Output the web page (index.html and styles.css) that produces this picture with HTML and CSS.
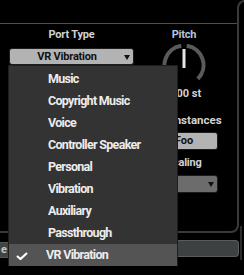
FILE: index.html
```html
<!DOCTYPE html>
<html>
<head>
<meta charset="utf-8">
<link rel="stylesheet" href="styles.css">
</head>
<body>
<div class="frame">
  <div class="main">
    <div class="top"></div>
    <div class="panel">
      <div class="cols">
        <div class="col">
          <div class="lbl">Port Type</div>
          <div class="select light"><span>VR Vibration</span><span class="arrow"></span></div>
        </div>
        <div class="col">
          <div class="lbl blue">Pitch</div>
          <svg class="knob" width="44" height="44" viewBox="0 0 44 44">
            <path d="M8.2 35.8 A19.5 19.5 0 0 1 19.3 2.7" fill="none" stroke="#5a5a5a" stroke-width="4"/>
            <path d="M24.7 2.7 A19.5 19.5 0 0 1 35.8 35.8" fill="none" stroke="#5a5a5a" stroke-width="4"/>
            <rect x="20.5" y="6" width="3" height="19" fill="#e4e4e4"/>
          </svg>
          <div class="val">0.00 st</div>
          <div class="lbl sub">Max Instances</div>
          <div class="field">Foo</div>
          <div class="lbl sub2">Scaling</div>
          <div class="select dark"><span></span><span class="arrow"></span></div>
        </div>
      </div>
    </div>
    <div class="bottom">
      <div class="bleft">e</div>
      <div class="bfield"></div>
    </div>
  </div>
  <div class="side">
    <div class="side-up"></div>
    <div class="side-low"></div>
  </div>
  <div class="menu">
    <div class="item">Music</div>
    <div class="item">Copyright Music</div>
    <div class="item">Voice</div>
    <div class="item">Controller Speaker</div>
    <div class="item">Personal</div>
    <div class="item">Vibration</div>
    <div class="item">Auxiliary</div>
    <div class="item">Passthrough</div>
    <div class="item sel"><svg class="check" width="12" height="8" viewBox="0 0 12 8"><path d="M1 4 L4.5 7 L11 1" fill="none" stroke="#fff" stroke-width="2.2"/></svg>VR Vibration</div>
  </div>
</div>
</body>
</html>
```
FILE: styles.css
```css
html, body {
  margin: 0;
  padding: 0;
  background: #000;
}
.frame {
  position: relative;
  width: 244px;
  height: 275px;
  overflow: hidden;
  background: #000;
  font-family: Roboto, "Liberation Sans", sans-serif;
  font-weight: 700;
  display: grid;
  grid-template-columns: 240px 4px;
  align-items: start;
}
.main {
  width: 240px;
}
.side {
  display: flex;
  flex-direction: column;
}
.side-up {
  box-sizing: border-box;
  margin-left: -3px;
  width: 12px;
  height: 226px;
  border-left: 2px solid #3a3a3a;
  border-top: 2px solid #3a3a3a;
  border-top-left-radius: 8px;
}
.side-low {
  box-sizing: border-box;
  width: 4px;
  height: 34px;
  border-left: 2px solid #2c2c2c;
}
.top {
  height: 23px;
}
.panel {
  box-sizing: border-box;
  margin-left: -10px;
  width: 249px;
  height: 210px;
  border-top: 1px solid #4e4e4e;
  border-right: 2px solid #3a3a3a;
  border-bottom: 2px solid #3a3a3a;
  border-bottom-right-radius: 8px;
  padding: 4px 0 0 19px;
}
.cols {
  display: grid;
  grid-template-columns: 125px 68px;
  column-gap: 16px;
  align-items: start;
}
.col {
  display: flex;
  flex-direction: column;
  align-items: center;
}
.lbl {
  height: 14px;
  line-height: 14px;
  font-size: 11px;
  letter-spacing: -0.2px;
  color: #d2d2d2;
  white-space: nowrap;
}
.lbl.blue {
  color: #b2c6de;
}
.select {
  box-sizing: border-box;
  margin-top: 6px;
  width: 125px;
  height: 17px;
  border: 1px solid #1c1c1c;
  border-radius: 3px;
  display: flex;
  align-items: center;
  justify-content: center;
  padding-right: 9px;
  position: relative;
  font-size: 11px;
  letter-spacing: -0.2px;
  color: #111;
}
.select.light {
  background: #b3b3b3;
}
.select.dark {
  background: #6c6c6c;
  width: 68px;
  height: 18px;
  margin-top: 5px;
}
.arrow {
  position: absolute;
  right: 3px;
  top: 6px;
  width: 0;
  height: 0;
  border-left: 3.5px solid transparent;
  border-right: 3.5px solid transparent;
  border-top: 5px solid #111;
}
.knob {
  margin-top: 1px;
  display: block;
}
.val {
  margin-top: 0;
  height: 14px;
  line-height: 14px;
  font-size: 11px;
  color: #d2d2d2;
  white-space: nowrap;
}
.lbl.sub {
  margin-top: 12px;
  font-size: 11.5px;
  letter-spacing: 0;
}
.field {
  box-sizing: border-box;
  margin-top: 5px;
  width: 68px;
  height: 18px;
  border: 1px solid #1c1c1c;
  border-radius: 3px;
  background: #b3b3b3;
  font-size: 11px;
  line-height: 16px;
  text-align: center;
  color: #111;
}
.lbl.sub2 {
  margin-top: 6px;
}
.bottom {
  margin-top: 7px;
  display: flex;
  align-items: flex-start;
}
.bleft {
  box-sizing: border-box;
  margin-top: 2px;
  width: 9px;
  height: 16px;
  background: #404445;
  border-top: 1px solid #55595a;
  border-bottom: 1px solid #55595a;
  font-size: 11px;
  line-height: 14px;
  color: #c3c8ca;
  text-align: right;
  padding-right: 2px;
}
.bfield {
  box-sizing: border-box;
  flex: none;
  width: 230px;
  height: 17px;
  border: 1px solid #5a5d5e;
  border-left: none;
  border-radius: 0 4px 4px 0;
  background: #3d4142;
}
.menu {
  position: absolute;
  left: 8px;
  top: 65px;
  box-sizing: border-box;
  width: 170px;
  height: 201px;
  background: #333;
  border: 1px solid #1e1e1e;
  padding-top: 2px;
}
.item {
  height: 22px;
  line-height: 22px;
  font-size: 12.5px;
  letter-spacing: -0.7px;
  color: #ececec;
  padding-left: 39px;
  white-space: nowrap;
  position: relative;
}
.item.sel {
  background: #545454;
  padding-left: 37px;
}
.check {
  position: absolute;
  left: 7px;
  top: 8px;
}
```
